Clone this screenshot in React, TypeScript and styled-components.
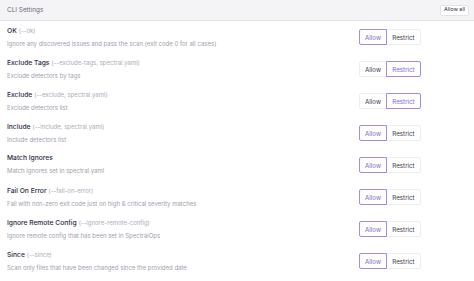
import * as React from "react";
import styled, { createGlobalStyle } from "styled-components";

const GlobalStyle = createGlobalStyle`
  html, body {
    margin: 0;
    padding: 0;
    background: #ffffff;
  }
  body {
    font-family: Inter, "Liberation Sans", sans-serif;
    -webkit-font-smoothing: antialiased;
  }
`;

const Panel = styled.div`
  width: 474px;
  height: 281px;
  overflow: hidden;
  background: #ffffff;
  display: flex;
  flex-direction: column;
`;

const Header = styled.div`
  height: 21px;
  box-sizing: border-box;
  display: flex;
  align-items: center;
  justify-content: space-between;
  padding: 0 5px 0 7px;
  background: #f4f4f6;
  border-bottom: 1px solid #e4e4ea;

  .title {
    font-size: 6.4px;
    color: #6b6b7e;
  }
`;

const AllowAllButton = styled.button`
  font-family: inherit;
  font-size: 5.4px;
  color: #2e2e44;
  background: #ffffff;
  border: 1px solid #e2e2e8;
  border-radius: 2px;
  height: 11px;
  padding: 0 3px;
  line-height: 1;
`;

const Row = styled.div`
  height: 32px;
  box-sizing: border-box;
  display: grid;
  grid-template-columns: 352px auto;
  align-items: center;
  padding-left: 7px;
`;

const Info = styled.div`
  display: flex;
  flex-direction: column;
  gap: 3px;
  padding-bottom: 1px;
`;

const Title = styled.div`
  font-size: 6.7px;
  line-height: 9px;
  font-weight: 500;
  color: #2b2b46;
  white-space: nowrap;

  span {
    font-weight: 400;
    font-size: 6px;
    color: #acacba;
    margin-left: 2px;
  }
`;

const Description = styled.div`
  font-size: 6px;
  line-height: 9px;
  color: #a0a0ae;
  white-space: nowrap;
`;

const Toggle = styled.div`
  display: flex;
  height: 16px;
`;

const ToggleButton = styled.button<{ $active: boolean; $side: "left" | "right"; $w: number }>`
  font-family: inherit;
  font-size: 6.2px;
  width: ${(p) => p.$w}px;
  height: 16px;
  padding: 0;
  background: #ffffff;
  color: ${(p) => (p.$active ? "#8463dc" : "#3a3a54")};
  border: 1px solid ${(p) => (p.$active ? "#a48ae6" : "#ececf1")};
  border-radius: ${(p) => (p.$side === "left" ? "2px 0 0 2px" : "0 2px 2px 0")};
  ${(p) => (p.$side === "right" ? "margin-left: -1px;" : "")}
  position: relative;
  z-index: ${(p) => (p.$active ? 1 : 0)};
`;

interface Setting {
  title: string;
  flag?: string;
  description: string;
  restricted: boolean;
}

const settings: Setting[] = [
  { title: "OK", flag: "(--ok)", description: "Ignore any discovered issues and pass the scan (exit code 0 for all cases)", restricted: false },
  { title: "Exclude Tags", flag: "(--exclude-tags, spectral.yaml)", description: "Exclude detectors by tags", restricted: true },
  { title: "Exclude", flag: "(--exclude, spectral.yaml)", description: "Exclude detectors list", restricted: true },
  { title: "Include", flag: "(--include, spectral.yaml)", description: "Include detectors list", restricted: false },
  { title: "Match Ignores", description: "Match ignores set in spectral.yaml", restricted: false },
  { title: "Fail On Error", flag: "(--fail-on-error)", description: "Fail with non-zero exit code just on high & critical severity matches", restricted: false },
  { title: "Ignore Remote Config", flag: "(--ignore-remote-config)", description: "Ignore remote config that has been set in SpectralOps", restricted: false },
  { title: "Since", flag: "(--since)", description: "Scan only files that have been changed since the provided date", restricted: false },
];

const App = () => {
  return (
    <>
      <GlobalStyle />
      <Panel>
        <Header>
          <div className="title">CLI Settings</div>
          <AllowAllButton>Allow all</AllowAllButton>
        </Header>
        {settings.map((s) => (
          <Row key={s.title}>
            <Info>
              <Title>
                {s.title}
                {s.flag && <span>{s.flag}</span>}
              </Title>
              <Description>{s.description}</Description>
            </Info>
            <Toggle>
              <ToggleButton $side="left" $w={28} $active={!s.restricted}>
                Allow
              </ToggleButton>
              <ToggleButton $side="right" $w={35} $active={s.restricted}>
                Restrict
              </ToggleButton>
            </Toggle>
          </Row>
        ))}
      </Panel>
    </>
  );
};

export default App;
